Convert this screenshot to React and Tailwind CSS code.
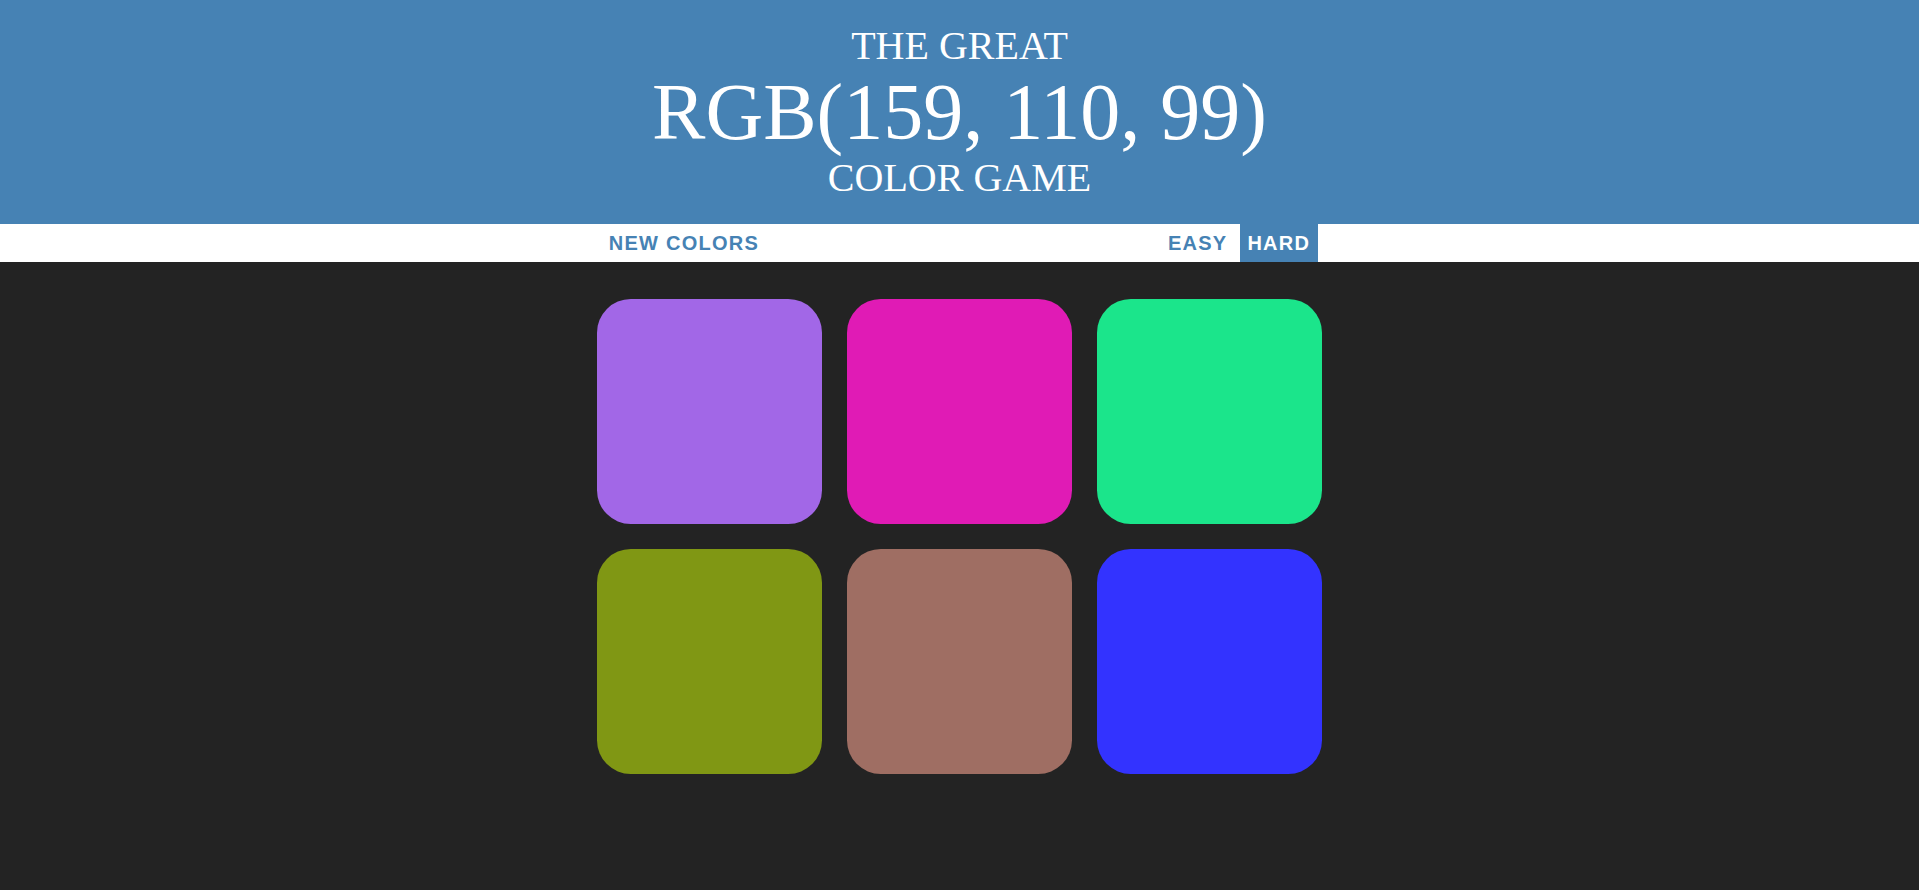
const squares = [
  "rgb(162, 103, 231)",
  "rgb(224, 27, 181)",
  "rgb(27, 229, 139)",
  "rgb(128, 151, 20)",
  "rgb(159, 110, 99)",
  "rgb(51, 51, 255)",
];

const target = "RGB(159, 110, 99)";

export default function App() {
  return (
    <div className="min-h-screen bg-[#232323] font-['Liberation_Serif',serif]">
      <h1 className="bg-[#4682b4] py-[24px] text-center text-[40px] font-normal uppercase leading-[1.1] text-white">
        <div>The Great</div>
        <div className="text-[80px] leading-[1.1]">{target}</div>
        <div>Color Game</div>
      </h1>

      <div className="flex h-[37.5px] items-stretch justify-center gap-[5px] bg-white font-['Liberation_Sans',Arial,sans-serif] text-[20px] font-bold">
        <button className="px-[7.5px] uppercase tracking-[1.25px] text-[#4682b4]">
          New Colors
        </button>
        <span className="w-[20%]" />
        <button className="px-[7.5px] uppercase tracking-[1.25px] text-[#4682b4]">
          Easy
        </button>
        <button className="bg-[#4682b4] px-[7.5px] uppercase tracking-[1.25px] text-white">
          Hard
        </button>
      </div>

      <div className="mx-auto mt-[25px] flex max-w-[750px] flex-wrap">
        {squares.map((color) => (
          <div
            key={color}
            className="m-[1.66%] aspect-square w-[30%] rounded-[15%]"
            style={{ backgroundColor: color }}
          />
        ))}
      </div>
    </div>
  );
}
